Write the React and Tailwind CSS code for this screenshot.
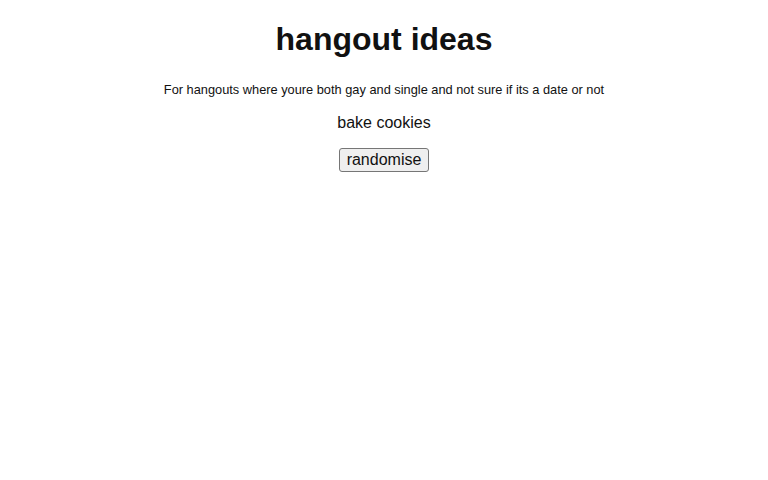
import { useState } from "react";

const IDEAS = [
  "bake cookies",
  "go for a walk",
  "watch a movie",
  "visit a museum",
  "get coffee",
  "play board games",
];

export default function App() {
  const [idea, setIdea] = useState(IDEAS[0]);

  const randomise = () => {
    setIdea(IDEAS[Math.floor(Math.random() * IDEAS.length)]);
  };

  return (
    <div className="min-h-screen bg-white text-[#111] font-['Liberation_Sans',Arial,sans-serif] flex flex-col items-center text-center">
      <h1 className="mt-[21px] text-[32px] leading-[37px] font-bold">hangout ideas</h1>
      <p className="mt-[24px] text-[12.8px] leading-[15px]">
        For hangouts where youre both gay and single and not sure if its a date or not
      </p>
      <p className="mt-[17px] text-[16px] leading-[18px]">{idea}</p>
      <button
        onClick={randomise}
        className="mt-[16px] h-[24px] px-[7px] text-[16px] leading-[18px] bg-[#efefef] border border-[#767676] rounded-[3px] hover:bg-[#e5e5e5]"
      >
        randomise
      </button>
    </div>
  );
}
